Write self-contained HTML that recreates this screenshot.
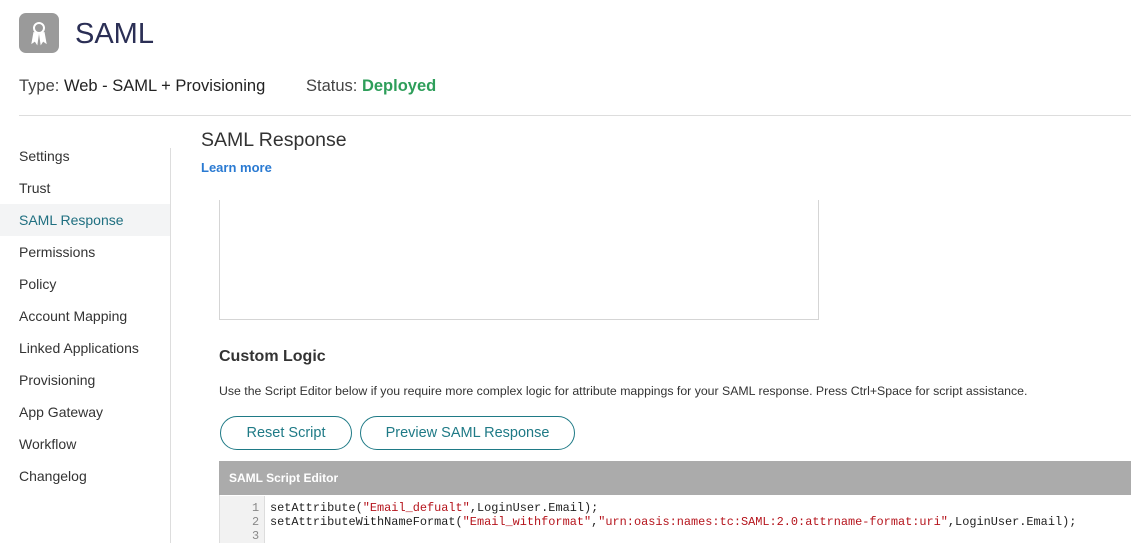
<!DOCTYPE html>
<html><head><style>
*{margin:0;padding:0;box-sizing:border-box}
body{width:1131px;height:543px;overflow:hidden;background:#fff;font-family:"Liberation Sans",sans-serif;color:#333;position:relative}
.a{position:absolute}
.nav div{position:absolute;left:0;width:170px;height:32px;line-height:32px;padding-left:19px;font-size:14px;color:#333}
.btn{position:absolute;top:416px;height:34px;border:1.5px solid #1f7a86;border-radius:17px;color:#1f7a86;font-size:14.5px;text-align:center;line-height:32px}
.code{font-family:"Liberation Mono",monospace;font-size:11.9px;white-space:pre;color:#222}
.s{color:#b5141c}
</style></head><body>
<div class="a" style="left:19px;top:13px;width:40px;height:40px;background:#9a9a9a;border-radius:7px">
<svg width="40" height="40" viewBox="0 0 40 40"><circle cx="20" cy="15" r="5" fill="none" stroke="#fff" stroke-width="2"/><path d="M15 19 L13 30 L16 28 L18 31 L19.5 21 M25 19 L27 30 L24 28 L22 31 L20.5 21" fill="#fff" stroke="#fff" stroke-width="1"/></svg></div>
<div class="a" style="left:75px;top:18px;font-size:29px;color:#2b2f55">SAML</div>
<div class="a" style="left:19px;top:77px;font-size:16.5px;color:#444">Type: <span style="color:#222">Web - SAML + Provisioning</span></div>
<div class="a" style="left:306px;top:77px;font-size:16.5px;color:#444">Status: <span style="color:#2e9e5a;font-weight:bold">Deployed</span></div>
<div class="a" style="left:19px;top:115px;width:1112px;height:1px;background:#ddd"></div>
<div class="a" style="left:170px;top:148px;width:1px;height:395px;background:#ddd"></div>
<div class="nav">
<div style="top:140px">Settings</div>
<div style="top:172px">Trust</div>
<div style="top:204px;background:#f3f4f5;color:#1f6f80">SAML Response</div>
<div style="top:236px">Permissions</div>
<div style="top:268px">Policy</div>
<div style="top:300px">Account Mapping</div>
<div style="top:332px">Linked Applications</div>
<div style="top:364px">Provisioning</div>
<div style="top:396px">App Gateway</div>
<div style="top:428px">Workflow</div>
<div style="top:460px">Changelog</div>
</div>
<div class="a" style="left:201px;top:129px;font-size:19.5px;color:#333">SAML Response</div>
<div class="a" style="left:201px;top:160px;font-size:13px;font-weight:bold;color:#2a7ad2">Learn more</div>
<div class="a" style="left:219px;top:200px;width:600px;height:120px;border:1px solid #d5d5d5;border-top:none"></div>
<div class="a" style="left:219px;top:348px;font-size:16px;font-weight:bold;color:#333">Custom Logic</div>
<div class="a" style="left:219px;top:384px;font-size:12.3px;color:#333">Use the Script Editor below if you require more complex logic for attribute mappings for your SAML response. Press Ctrl+Space for script assistance.</div>
<div class="btn" style="left:220px;width:132px">Reset Script</div>
<div class="btn" style="left:360px;width:215px">Preview SAML Response</div>
<div class="a" style="left:219px;top:461px;width:912px;height:34px;background:#ababab;color:#fff;font-weight:bold;font-size:12px;line-height:34px;padding-left:10px">SAML Script Editor</div>
<div class="a" style="left:219px;top:495px;width:912px;height:48px;border-left:1px solid #ddd"></div>
<div class="a" style="left:220px;top:496px;width:45px;height:47px;background:#f2f2f2;border-right:1px solid #ddd"></div>
<div class="a code" style="left:252px;top:501px;line-height:14px;color:#888">1
2
3</div>
<div class="a code" style="left:270px;top:501px;line-height:14px">setAttribute(<span class="s">"Email_defualt"</span>,LoginUser.Email);
setAttributeWithNameFormat(<span class="s">"Email_withformat"</span>,<span class="s">"urn:oasis:names:tc:SAML:2.0:attrname-format:uri"</span>,LoginUser.Email);</div>
</body></html>
